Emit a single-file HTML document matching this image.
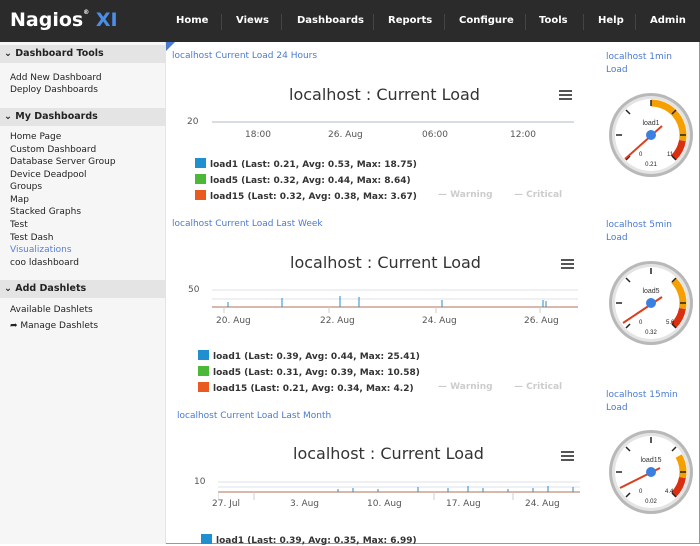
<!DOCTYPE html>
<html><head><meta charset="utf-8"><style>
*{margin:0;padding:0;box-sizing:border-box}
body{width:700px;height:544px;overflow:hidden;background:#fff;font-family:"DejaVu Sans","Liberation Sans",sans-serif;position:relative;border-right:1px solid #999;border-bottom:1px solid #999}
.a{position:absolute;white-space:nowrap}
#hdr{position:absolute;left:0;top:0;width:700px;height:42px;background:#2b2b2b}
.nav{position:absolute;top:15px;color:#fff;font:bold 10px "DejaVu Sans",sans-serif}
.sep{position:absolute;top:14px;width:1px;height:16px;background:#444}
#side{position:absolute;left:0;top:42px;width:166px;height:502px;background:#f6f6f6;border-right:1px solid #e4e4e4}
.sh{position:absolute;left:0;width:165px;height:18px;background:#e4e4e4;font:bold 9.5px "DejaVu Sans",sans-serif;color:#222;padding:3px 0 0 4px}
.si{position:absolute;left:10px;font-size:9px;color:#222}
.lk{position:absolute;color:#4a7ad0;font-size:9px;white-space:nowrap}
.ct{position:absolute;font:16px "DejaVu Sans",sans-serif;color:#333;white-space:nowrap}
.lg{position:absolute;font:bold 9px "DejaVu Sans",sans-serif;color:#333;white-space:nowrap}
.lg i{display:inline-block;width:11px;height:10px;vertical-align:-1px;margin-right:4px}
.ax{position:absolute;font-size:9px;color:#555;white-space:nowrap}
.wc{position:absolute;font:bold 9px "DejaVu Sans",sans-serif;color:#ccc;white-space:nowrap}
.hb{position:absolute;width:13px}
.hb b{display:block;height:2px;background:#555;margin-bottom:2px}
</style></head><body>
<div id="hdr">
<div class="a" style="left:10px;top:9px;color:#fff;font:bold 19px 'DejaVu Sans',sans-serif">Nagios<span style="font-size:6px;vertical-align:top">®</span> <span style="color:#4a8ee8">XI</span></div>
<div class="nav" style="left:176px">Home</div><div class="sep" style="left:221px"></div>
<div class="nav" style="left:236px">Views</div><div class="sep" style="left:281px"></div>
<div class="nav" style="left:297px">Dashboards</div><div class="sep" style="left:373px"></div>
<div class="nav" style="left:388px">Reports</div><div class="sep" style="left:444px"></div>
<div class="nav" style="left:459px">Configure</div><div class="sep" style="left:525px"></div>
<div class="nav" style="left:539px">Tools</div><div class="sep" style="left:583px"></div>
<div class="nav" style="left:598px">Help</div><div class="sep" style="left:635px"></div>
<div class="nav" style="left:650px">Admin</div>
</div>
<div id="side">
<div class="sh" style="top:3px">⌄ Dashboard Tools</div>
<div class="si" style="top:31px">Add New Dashboard</div>
<div class="si" style="top:43px">Deploy Dashboards</div>
<div class="sh" style="top:66px">⌄ My Dashboards</div>
<div class="si" style="top:90px">Home Page</div>
<div class="si" style="top:103px">Custom Dashboard</div>
<div class="si" style="top:115px">Database Server Group</div>
<div class="si" style="top:128px">Device Deadpool</div>
<div class="si" style="top:140px">Groups</div>
<div class="si" style="top:153px">Map</div>
<div class="si" style="top:165px">Stacked Graphs</div>
<div class="si" style="top:178px">Test</div>
<div class="si" style="top:191px">Test Dash</div>
<div class="si" style="top:203px;color:#5a7ed0">Visualizations</div>
<div class="si" style="top:216px">coo ldashboard</div>
<div class="sh" style="top:238px">⌄ Add Dashlets</div>
<div class="si" style="top:263px">Available Dashlets</div>
<div class="si" style="top:279px">➦ Manage Dashlets</div>
</div>
<svg class="a" style="left:166px;top:42px" width="10" height="10"><polygon points="0,0 9,0 0,9" fill="#4a7ad0"/></svg>

<!-- panel 1 -->
<div class="lk" style="left:172px;top:51px">localhost Current Load 24 Hours</div>
<div class="ct" style="left:289px;top:85px">localhost : Current Load</div>
<div class="hb" style="left:559px;top:90px"><b></b><b></b><b></b></div>
<div class="ax" style="left:187px;top:117px">20</div>
<div class="a" style="left:212px;top:121px;width:362px;height:2px;background:#d8dde4"></div>
<div class="ax" style="left:245px;top:130px">18:00</div>
<div class="ax" style="left:328px;top:130px">26. Aug</div>
<div class="ax" style="left:422px;top:130px">06:00</div>
<div class="ax" style="left:510px;top:130px">12:00</div>
<div class="lg" style="left:195px;top:158px"><i style="background:#1f8fd0"></i>load1 (Last: 0.21, Avg: 0.53, Max: 18.75)</div>
<div class="lg" style="left:195px;top:174px"><i style="background:#4cb838"></i>load5 (Last: 0.32, Avg: 0.44, Max: 8.64)</div>
<div class="lg" style="left:195px;top:190px"><i style="background:#e85a20"></i>load15 (Last: 0.32, Avg: 0.38, Max: 3.67)</div>
<div class="wc" style="left:438px;top:190px">— Warning</div>
<div class="wc" style="left:514px;top:190px">— Critical</div>

<!-- panel 2 -->
<div class="lk" style="left:172px;top:219px">localhost Current Load Last Week</div>
<div class="ct" style="left:290px;top:253px">localhost : Current Load</div>
<div class="hb" style="left:561px;top:259px"><b></b><b></b><b></b></div>
<div class="ax" style="left:188px;top:285px">50</div>
<svg class="a" style="left:212px;top:288px" width="366" height="25">
<line x1="0" y1="2" x2="366" y2="2" stroke="#dde2e8"/><line x1="0" y1="11" x2="366" y2="11" stroke="#dde2e8"/>
<line x1="0" y1="19" x2="366" y2="19" stroke="#c9a090" stroke-width="1.5"/>
<g stroke="#2a8ec8" stroke-width="1"><line x1="16" y1="19" x2="16" y2="14"/><line x1="70" y1="19" x2="70" y2="10"/><line x1="128" y1="19" x2="128" y2="8"/><line x1="147" y1="19" x2="147" y2="9"/><line x1="230" y1="19" x2="230" y2="12"/><line x1="331" y1="19" x2="331" y2="12"/><line x1="334" y1="19" x2="334" y2="13"/></g>
<g stroke="#ccc"><line x1="12" y1="19" x2="12" y2="25"/><line x1="117" y1="19" x2="117" y2="25"/><line x1="224" y1="19" x2="224" y2="25"/><line x1="328" y1="19" x2="328" y2="25"/></g>
</svg>
<div class="ax" style="left:216px;top:316px">20. Aug</div>
<div class="ax" style="left:320px;top:316px">22. Aug</div>
<div class="ax" style="left:422px;top:316px">24. Aug</div>
<div class="ax" style="left:524px;top:316px">26. Aug</div>
<div class="lg" style="left:198px;top:350px"><i style="background:#1f8fd0"></i>load1 (Last: 0.39, Avg: 0.44, Max: 25.41)</div>
<div class="lg" style="left:198px;top:366px"><i style="background:#4cb838"></i>load5 (Last: 0.31, Avg: 0.39, Max: 10.58)</div>
<div class="lg" style="left:198px;top:382px"><i style="background:#e85a20"></i>load15 (Last: 0.21, Avg: 0.34, Max: 4.2)</div>
<div class="wc" style="left:438px;top:382px">— Warning</div>
<div class="wc" style="left:514px;top:382px">— Critical</div>

<!-- panel 3 -->
<div class="lk" style="left:177px;top:411px">localhost Current Load Last Month</div>
<div class="ct" style="left:293px;top:444px">localhost : Current Load</div>
<div class="hb" style="left:561px;top:451px"><b></b><b></b><b></b></div>
<div class="ax" style="left:194px;top:477px">10</div>
<svg class="a" style="left:218px;top:480px" width="362" height="20">
<line x1="0" y1="2" x2="362" y2="2" stroke="#dde2e8"/><line x1="0" y1="7" x2="362" y2="7" stroke="#dde2e8"/>
<line x1="0" y1="12" x2="362" y2="12" stroke="#c9a090" stroke-width="1.5"/>
<g stroke="#2a8ec8"><line x1="120" y1="12" x2="120" y2="9"/><line x1="135" y1="12" x2="135" y2="8"/><line x1="160" y1="12" x2="160" y2="9"/><line x1="200" y1="12" x2="200" y2="7"/><line x1="230" y1="12" x2="230" y2="8"/><line x1="250" y1="12" x2="250" y2="6"/><line x1="265" y1="12" x2="265" y2="8"/><line x1="290" y1="12" x2="290" y2="9"/><line x1="315" y1="12" x2="315" y2="8"/><line x1="330" y1="12" x2="330" y2="6"/><line x1="355" y1="12" x2="355" y2="7"/></g>
<g stroke="#ccc"><line x1="-22" y1="12" x2="-22" y2="20"/><line x1="0" y1="12" x2="0" y2="20"/><line x1="36" y1="12" x2="36" y2="20"/><line x1="216" y1="12" x2="216" y2="20"/><line x1="295" y1="12" x2="295" y2="20"/></g>
</svg>
<div class="ax" style="left:212px;top:499px">27. Jul</div>
<div class="ax" style="left:290px;top:499px">3. Aug</div>
<div class="ax" style="left:367px;top:499px">10. Aug</div>
<div class="ax" style="left:446px;top:499px">17. Aug</div>
<div class="ax" style="left:525px;top:499px">24. Aug</div>
<div class="lg" style="left:201px;top:534px"><i style="background:#1f8fd0"></i>load1 (Last: 0.39, Avg: 0.35, Max: 6.99)</div>

<!-- gauges -->
<div class="lk" style="left:606px;top:51px;line-height:12.5px;white-space:normal;width:80px">localhost 1min<br>Load</div>
<div class="lk" style="left:606px;top:219px;line-height:12.5px;white-space:normal;width:80px">localhost 5min<br>Load</div>
<div class="lk" style="left:606px;top:389px;line-height:12.5px;white-space:normal;width:80px">localhost 15min<br>Load</div>

<svg class="a" style="left:607px;top:91px" width="88" height="88" viewBox="-44 -44 88 88">
<circle r="42" fill="#b8b8b8"/><circle r="39" fill="#e4e4e4"/><circle r="36" fill="#fff"/>
<path d="M0,-32 A32,32 0 0 1 31.5,5.6" fill="none" stroke="#f5a000" stroke-width="7"/>
<path d="M31.5,5.6 A32,32 0 0 1 22.6,22.6" fill="none" stroke="#d83010" stroke-width="7"/>
<g stroke="#222" stroke-width="1.5"><line x1="-25" y1="25" x2="-21" y2="21"/><line x1="-35" y1="0" x2="-29" y2="0"/><line x1="-25" y1="-25" x2="-21" y2="-21"/><line x1="0" y1="-35" x2="0" y2="-29"/><line x1="25" y1="-25" x2="21" y2="-21"/><line x1="35" y1="0" x2="29" y2="0"/><line x1="25" y1="25" x2="21" y2="21"/></g>
<text x="0" y="-10" font-size="7" font-family="Liberation Sans" text-anchor="middle" fill="#333">load1</text>
<line x1="-26" y1="24" x2="11" y2="-9" stroke="#d84020" stroke-width="2"/>
<circle r="5" fill="#3a80e0"/>
<text x="-12" y="21" font-size="6" font-family="Liberation Sans" fill="#222">0</text>
<text x="16" y="21" font-size="6" font-family="Liberation Sans" fill="#222">11</text>
<text x="0" y="31" font-size="6" font-family="Liberation Sans" text-anchor="middle" fill="#222">0.21</text>
</svg>

<svg class="a" style="left:607px;top:259px" width="88" height="88" viewBox="-44 -44 88 88">
<circle r="42" fill="#b8b8b8"/><circle r="39" fill="#e4e4e4"/><circle r="36" fill="#fff"/>
<path d="M22.6,-22.6 A32,32 0 0 1 31.5,5.6" fill="none" stroke="#f5a000" stroke-width="7"/>
<path d="M31.5,5.6 A32,32 0 0 1 22.6,22.6" fill="none" stroke="#d83010" stroke-width="7"/>
<g stroke="#222" stroke-width="1.5"><line x1="-25" y1="25" x2="-21" y2="21"/><line x1="-35" y1="0" x2="-29" y2="0"/><line x1="-25" y1="-25" x2="-21" y2="-21"/><line x1="0" y1="-35" x2="0" y2="-29"/><line x1="25" y1="-25" x2="21" y2="-21"/><line x1="35" y1="0" x2="29" y2="0"/><line x1="25" y1="25" x2="21" y2="21"/></g>
<text x="0" y="-10" font-size="7" font-family="Liberation Sans" text-anchor="middle" fill="#333">load5</text>
<line x1="-28" y1="20" x2="11" y2="-6" stroke="#d84020" stroke-width="2"/>
<circle r="5" fill="#3a80e0"/>
<text x="-12" y="21" font-size="6" font-family="Liberation Sans" fill="#222">0</text>
<text x="15" y="21" font-size="6" font-family="Liberation Sans" fill="#222">5.6</text>
<text x="0" y="31" font-size="6" font-family="Liberation Sans" text-anchor="middle" fill="#222">0.32</text>
</svg>

<svg class="a" style="left:607px;top:428px" width="88" height="88" viewBox="-44 -44 88 88">
<circle r="42" fill="#b8b8b8"/><circle r="39" fill="#e4e4e4"/><circle r="36" fill="#fff"/>
<path d="M27.7,-16 A32,32 0 0 1 31.5,5.6" fill="none" stroke="#f5a000" stroke-width="7"/>
<path d="M31.5,5.6 A32,32 0 0 1 22.6,22.6" fill="none" stroke="#d83010" stroke-width="7"/>
<g stroke="#222" stroke-width="1.5"><line x1="-25" y1="25" x2="-21" y2="21"/><line x1="-35" y1="0" x2="-29" y2="0"/><line x1="-25" y1="-25" x2="-21" y2="-21"/><line x1="0" y1="-35" x2="0" y2="-29"/><line x1="25" y1="-25" x2="21" y2="-21"/><line x1="35" y1="0" x2="29" y2="0"/><line x1="25" y1="25" x2="21" y2="21"/></g>
<text x="0" y="-10" font-size="7" font-family="Liberation Sans" text-anchor="middle" fill="#333">load15</text>
<line x1="-31" y1="16" x2="9" y2="-4" stroke="#d84020" stroke-width="2"/>
<circle r="5" fill="#3a80e0"/>
<text x="-12" y="21" font-size="6" font-family="Liberation Sans" fill="#222">0</text>
<text x="14" y="21" font-size="6" font-family="Liberation Sans" fill="#222">4.4</text>
<text x="0" y="31" font-size="6" font-family="Liberation Sans" text-anchor="middle" fill="#222">0.02</text>
</svg>
</body></html>
